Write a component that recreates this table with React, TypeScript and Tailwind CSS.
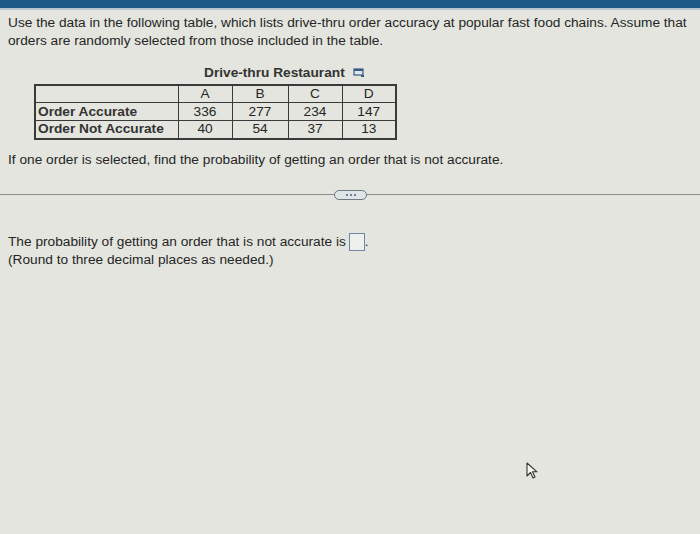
import React from "react";

export default function App() {
  const cell = "border border-[#3a3a3a] text-center font-normal";
  return (
    <div
      className="w-[700px] h-[534px] overflow-hidden bg-[#e3e5de] text-[#262626] relative"
      style={{ fontFamily: '"Liberation Sans", Arial, sans-serif' }}
    >
      <div className="h-[8px] bg-[#1c5a88]" />
      <div className="h-[2px] bg-[#b9c6cf]" />
      <div className="pl-[8px] pt-[4px] text-[13.7px] leading-[18px]">
        <p>
          Use the data in the following table, which lists drive-thru order accuracy at popular fast food chains. Assume that
          <br />
          orders are randomly selected from those included in the table.
        </p>
        <div className="pl-[26px] mt-[13px]">
          <div className="flex items-center pl-[170px] h-[20px] mb-[1px]">
            <span className="font-bold text-[#333]">Drive-thru Restaurant</span>
            <svg width="12" height="10" viewBox="0 0 12 10" className="ml-[8px]">
              <rect x="1" y="1" width="9" height="6" fill="#dfe6ee" stroke="#3a5a86" strokeWidth="1.2" />
              <rect x="1" y="1" width="9" height="2" fill="#3a5a86" />
              <rect x="8" y="7" width="3" height="2" fill="#3a5a86" />
            </svg>
          </div>
          <table className="border-collapse border-2 border-[#3a3a3a] text-[13.7px] leading-[16px]">
            <tbody>
              <tr className="h-[17px]">
                <td className={`${cell} w-[143px]`}></td>
                <td className={`${cell} w-[54px]`}>A</td>
                <td className={`${cell} w-[56px]`}>B</td>
                <td className={`${cell} w-[54px]`}>C</td>
                <td className={`${cell} w-[54px]`}>D</td>
              </tr>
              <tr className="h-[18px]">
                <td className="border border-[#3a3a3a] text-left pl-[2px] font-bold text-[#333]">Order Accurate</td>
                <td className={cell}>336</td>
                <td className={cell}>277</td>
                <td className={cell}>234</td>
                <td className={cell}>147</td>
              </tr>
              <tr className="h-[18px]">
                <td className="border border-[#3a3a3a] text-left pl-[2px] font-bold text-[#333]">Order Not Accurate</td>
                <td className={cell}>40</td>
                <td className={cell}>54</td>
                <td className={cell}>37</td>
                <td className={cell}>13</td>
              </tr>
            </tbody>
          </table>
        </div>
        <p className="mt-[11px]">If one order is selected, find the probability of getting an order that is not accurate.</p>
      </div>
      <div className="relative mt-[21px] h-[10px] flex items-center">
        <div className="w-full h-[1px] bg-[#8a8d88]" />
        <div className="absolute left-[334px] top-0 w-[33px] h-[10px] rounded-full border border-[#6c7a88] bg-[#dfe4e6] flex items-center justify-center gap-[2px]">
          <span className="w-[2px] h-[2px] bg-[#44607c] rounded-full" />
          <span className="w-[2px] h-[2px] bg-[#44607c] rounded-full" />
          <span className="w-[2px] h-[2px] bg-[#44607c] rounded-full" />
        </div>
      </div>
      <div className="pl-[8px] mt-[33px] text-[13.7px] leading-[18px]">
        <p className="flex items-center">
          The probability of getting an order that is not accurate is
          <span className="inline-block w-[16px] h-[18px] border border-[#6f86a8] bg-[#eef0ee] ml-[3px]" />
          <span>.</span>
        </p>
        <p>(Round to three decimal places as needed.)</p>
      </div>
      <svg className="absolute left-[526px] top-[462px]" width="14" height="18" viewBox="0 0 14 18">
        <path d="M1 1 L1 14 L4.5 10.5 L7 16 L9 15 L6.5 9.8 L11 9.8 Z" fill="#f5f5f2" stroke="#333" strokeWidth="1.1" strokeLinejoin="round" />
      </svg>
    </div>
  );
}
